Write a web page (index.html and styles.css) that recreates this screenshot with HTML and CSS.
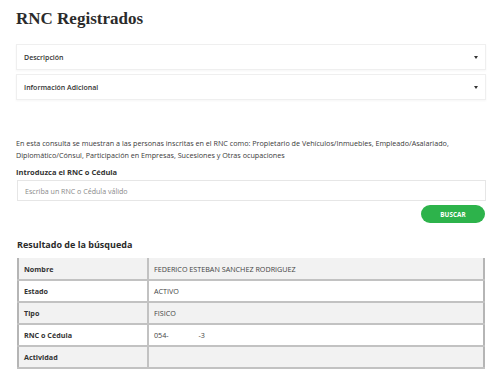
FILE: index.html
```html
<!DOCTYPE html>
<html lang="es">
<head>
<meta charset="utf-8">
<title>RNC Registrados</title>
<link rel="stylesheet" href="styles.css">
</head>
<body>
<main class="page">
  <h1 class="title">RNC Registrados</h1>
  <div class="accordion">
    <div class="acc-item"><span>Descripción</span><span class="caret"></span></div>
    <div class="acc-item"><span>Información Adicional</span><span class="caret"></span></div>
  </div>
  <p class="intro">En esta consulta se muestran a las personas inscritas en el RNC como: Propietario de Vehículos/Inmuebles, Empleado/Asalariado, Diplomático/Cónsul, Participación en Empresas, Sucesiones y Otras ocupaciones</p>
  <label class="label" for="rnc">Introduzca el RNC o Cédula</label>
  <input class="input" id="rnc" type="text" placeholder="Escriba un RNC o Cédula válido">
  <div class="actions"><button class="btn" type="button">BUSCAR</button></div>
  <h2 class="result-title">Resultado de la búsqueda</h2>
  <table class="result">
    <tr class="odd"><th>Nombre</th><td>FEDERICO ESTEBAN SANCHEZ RODRIGUEZ</td></tr>
    <tr><th>Estado</th><td>ACTIVO</td></tr>
    <tr class="odd"><th>Tipo</th><td>FISICO</td></tr>
    <tr><th>RNC o Cédula</th><td>054-&nbsp;&nbsp;&nbsp;&nbsp;&nbsp;&nbsp;&nbsp;&nbsp;&nbsp;&nbsp;&nbsp;&nbsp;&nbsp;&nbsp;&nbsp;&nbsp;-3</td></tr>
    <tr class="odd"><th>Actividad</th><td></td></tr>
  </table>
</main>
</body>
</html>
```
FILE: styles.css
```css
* { box-sizing: border-box; }
html, body { margin: 0; padding: 0; background: #fff; }
body {
  font-family: "Open Sans", "Liberation Sans", sans-serif;
  font-size: 7.2px;
  color: #333;
}
.page {
  padding: 8px 4px 0 16px;
}
.title {
  margin: 0;
  font-family: "Liberation Serif", "DejaVu Serif", serif;
  font-weight: 700;
  font-size: 17px;
  line-height: 22px;
  color: #2b2b2b;
}
.accordion {
  margin-top: 14px;
  display: flex;
  flex-direction: column;
  gap: 4px;
}
.acc-item {
  height: 26px;
  border: 1px solid #efefef;
  box-shadow: 0 1px 2px rgba(0,0,0,0.04);
  display: flex;
  align-items: center;
  justify-content: space-between;
  padding: 0 7px 0 7px;
  font-weight: 600;
  font-size: 7px;
  color: #333;
}
.caret {
  width: 0;
  height: 0;
  border-left: 2.5px solid transparent;
  border-right: 2.5px solid transparent;
  border-top: 3px solid #333;
}
.intro {
  margin: 37px 0 0 0;
  line-height: 12px;
  font-size: 7.2px;
  color: #3a3a3a;
}
.label {
  display: block;
  margin-top: 5px;
  font-weight: 700;
  font-size: 7.5px;
  line-height: 12px;
  color: #333;
}
.input {
  display: block;
  margin-top: 2px;
  margin-left: 1px;
  width: calc(100% - 1px);
  height: 21px;
  border: 1px solid #e6e6e6;
  padding: 0 7px;
  font-family: "Open Sans", "Liberation Sans", sans-serif;
  font-size: 7.1px;
  color: #333;
  outline: none;
}
.input::placeholder { color: #8a8a8a; }
.actions {
  display: flex;
  justify-content: flex-end;
  margin-top: 4px;
  padding-right: 1px;
}
.btn {
  width: 64px;
  height: 18px;
  border: 0;
  border-radius: 9px;
  background: #2db34b;
  color: #fff;
  font-family: "Open Sans", "Liberation Sans", sans-serif;
  font-weight: 700;
  font-size: 6.3px;
  letter-spacing: 0.1px;
  padding: 0;
}
.result-title {
  margin: 15px 0 0 1px;
  font-size: 9px;
  font-weight: 700;
  line-height: 14px;
  color: #2b2b2b;
}
.result {
  margin-top: 6px;
  margin-left: 1px;
  width: calc(100% - 2px);
  border-collapse: collapse;
  border-left: 2px solid #b5b5b5;
  border-right: 2px solid #b5b5b5;
  font-size: 7.2px;
}
.result tr { height: 22px; }
.result th, .result td {
  text-align: left;
  padding: 0 5px;
  border-bottom: 2px solid #c2c2c2;
  vertical-align: middle;
}
.result th {
  width: 130px;
  font-weight: 700;
  color: #333;
  border-right: 2px solid #c2c2c2;
}
.result td { font-weight: 400; color: #444; }
.result tr.odd th, .result tr.odd td { background: #f2f2f2; }
```
